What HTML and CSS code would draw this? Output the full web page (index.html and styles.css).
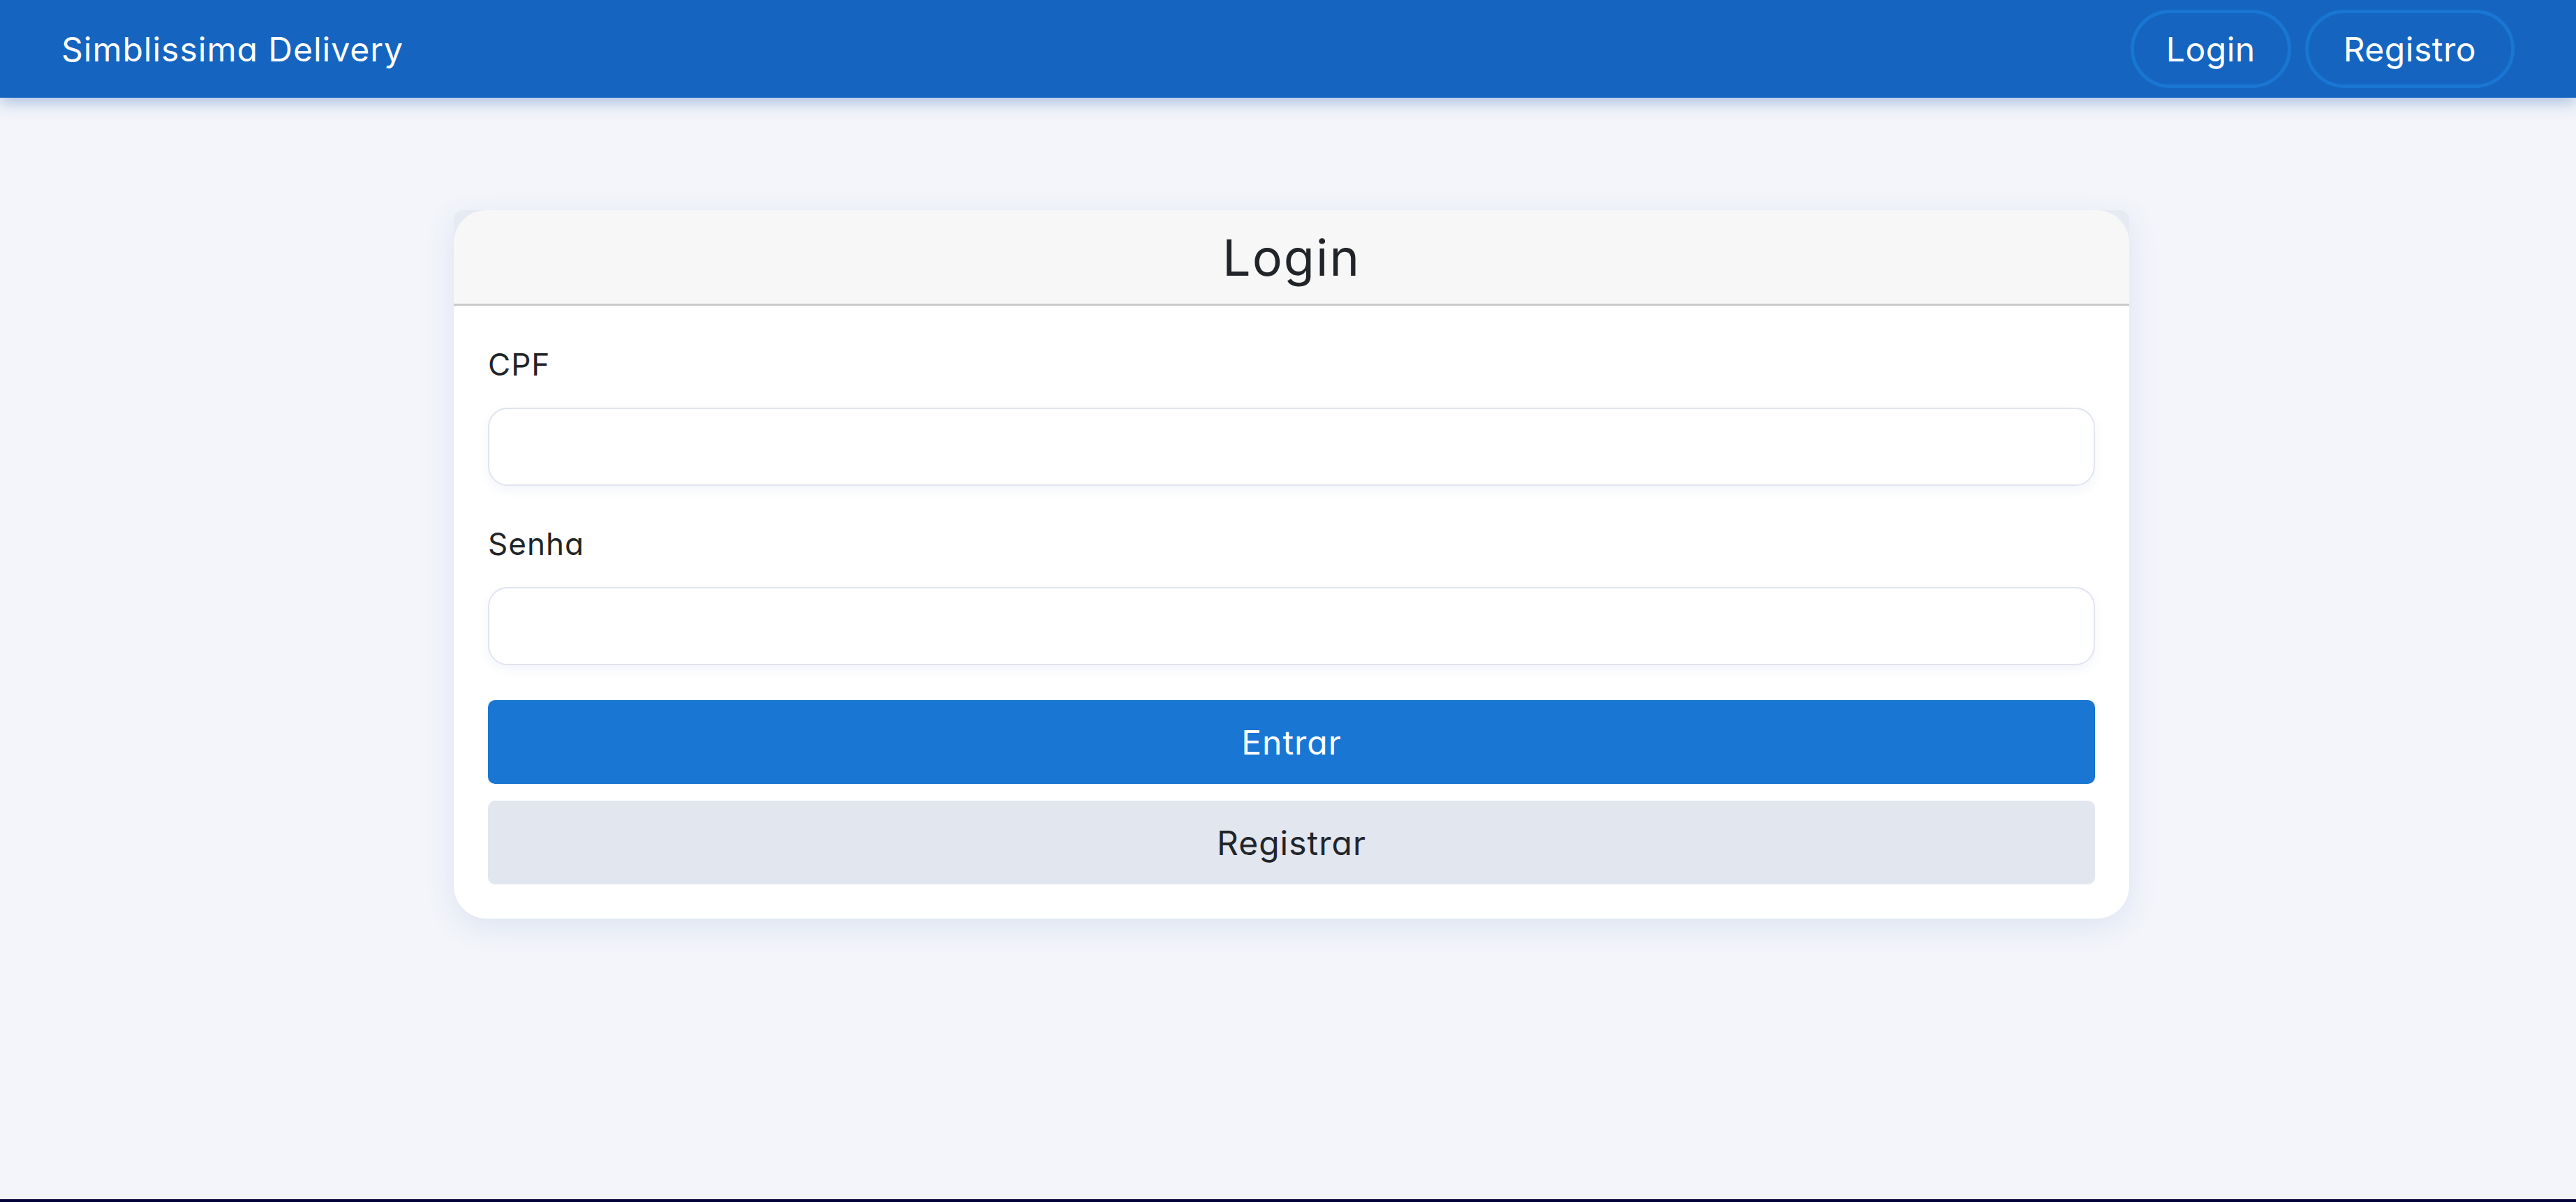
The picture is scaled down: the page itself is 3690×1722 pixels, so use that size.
FILE: index.html
```html
<!DOCTYPE html>
<html lang="pt-BR">
<head>
  <meta charset="UTF-8" />
  <title>Simblissima Delivery - Login</title>
  <link rel="stylesheet" href="styles.css">
</head>
<body>

  <nav class="navbar">
    <a class="brand" href="#">Simblissima Delivery</a>
    <div class="nav-links">
      <a class="nav-btn" href="#">Login</a>
      <a class="nav-btn" href="#">Registro</a>
    </div>
  </nav>

  <main class="page">
    <div class="login-card">
      <div class="card-header">
        <h2>Login</h2>
      </div>
      <form class="card-body">
        <div class="field">
          <label for="cpf">CPF</label>
          <input type="text" id="cpf" />
        </div>
        <div class="field">
          <label for="senha">Senha</label>
          <input type="password" id="senha" />
        </div>
        <button type="button" class="btn btn-primary">Entrar</button>
        <button type="button" class="btn btn-secondary">Registrar</button>
      </form>
    </div>
  </main>

  <footer class="footer"></footer>

</body>
</html>
```

FILE: styles.css
```css
body {
  font-family: 'Inter', 'Open Sans', sans-serif;
  font-feature-settings: "cv11";
  background: #f3f5fa;
  color: #212529;
  margin: 0;
  height: 100vh;
  display: flex;
  flex-direction: column;
  overflow: hidden;
}

.navbar {
  height: 140px;
  flex-shrink: 0;
  padding: 0 88px;
  background: #1565c0;
  display: flex;
  align-items: center;
  justify-content: space-between;
  box-shadow: 0 6px 22px rgba(21, 80, 170, 0.35);
  position: relative;
  z-index: 1;
}

.brand {
  color: #fff;
  font-size: 48px;
  text-decoration: none;
  letter-spacing: 1px;
}

.nav-links {
  display: flex;
  gap: 20px;
}

.nav-btn {
  height: 112px;
  box-sizing: border-box;
  padding: 0 50px;
  border: 5px solid #1976d2;
  border-radius: 56px;
  color: #fff;
  font-size: 48px;
  text-decoration: none;
  display: flex;
  align-items: center;
  letter-spacing: 0.5px;
}

.nav-btn:first-child {
  padding: 0 46px;
}

.page {
  flex: 1;
  padding: 161px 0 0 10px;
}

.login-card {
  width: 2400px;
  margin: 0 auto;
  background: #e6eaf3;
  border-radius: 14px 14px 47px 47px;
  box-shadow: 0 12px 44px rgba(40, 80, 180, 0.10);
}

.card-header {
  height: 137px;
  box-sizing: border-box;
  background: #f7f7f7;
  border-radius: 47px 47px 0 0;
  border-bottom: 3px solid #cacaca;
  display: flex;
  align-items: center;
  justify-content: center;
}

.card-header h2 {
  margin: 0;
  font-size: 72px;
  font-weight: 400;
  letter-spacing: 2px;
}

.card-body {
  background: #fff;
  border-radius: 0 0 47px 47px;
  padding: 51px 49px 49px;
  display: flex;
  flex-direction: column;
}

.field {
  display: flex;
  flex-direction: column;
  margin-bottom: 50px;
}

.field label {
  font-size: 44px;
  line-height: 67px;
  letter-spacing: 1px;
}

.field input {
  margin-top: 28px;
  height: 112px;
  box-sizing: border-box;
  border: 2.5px solid #e0e4ef;
  border-radius: 28px;
  background: #fff;
  box-shadow: 0 6px 16px rgba(40, 70, 150, 0.06);
  font-size: 44px;
  padding: 0 30px;
}

.btn {
  height: 120px;
  border: none;
  border-radius: 10px;
  font-family: inherit;
  font-feature-settings: "cv11";
  font-size: 48px;
  letter-spacing: 1px;
}

.btn-primary {
  background: #1976d2;
  color: #fff;
}

.btn-secondary {
  margin-top: 24px;
  background: #e2e6ef;
  color: #212529;
}

.footer {
  height: 4px;
  flex-shrink: 0;
  background: #03033a;
}
```
